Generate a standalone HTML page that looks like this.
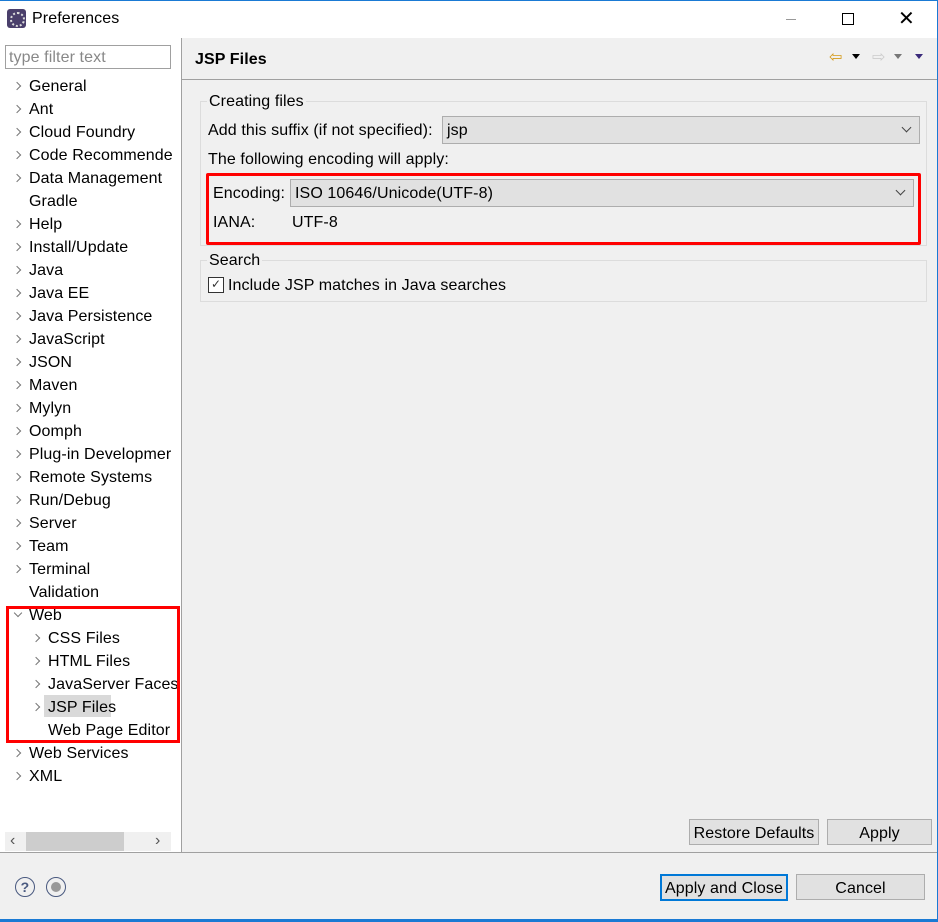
<!DOCTYPE html>
<html><head><style>
body{margin:0;width:938px;height:922px;position:relative;overflow:hidden;background:#f0f0f0;font-family:"Liberation Sans",sans-serif;font-size:16px;letter-spacing:0.1px;color:#000}
.a{position:absolute;white-space:nowrap}
.t{position:absolute;height:23px;line-height:23px;white-space:nowrap}
.ch{position:absolute;width:5px;height:5px;border-right:1px solid #777;border-bottom:1px solid #777;transform:rotate(-45deg)}
.btn{position:absolute;background:#e1e1e1;border:1px solid #adadad;text-align:center;line-height:24px;height:24px}
.r{position:relative;top:2px}
</style></head><body>
<div class="a" style="left:0;top:0;width:938px;height:1px;background:#1a7ad4"></div>
<div class="a" style="left:0;top:1px;width:938px;height:37px;background:#fff"></div>
<div class="a" style="left:7px;top:9px;width:19px;height:19px;border-radius:3px;background:#4a3f6b"></div>
<div class="a" style="left:10px;top:12px;width:11px;height:11px;border-radius:50%;border:2px dotted #ddd"></div>
<div class="a" style="left:32px;top:10px;font-size:16px">Preferences</div>
<div class="a" style="left:786px;top:19px;width:10px;height:1px;background:#999"></div>
<div class="a" style="left:842px;top:13px;width:10px;height:10px;border:1px solid #000"></div>
<div class="a" style="left:898px;top:6px;font-size:20px;font-weight:300">✕</div>
<div class="a" style="left:937px;top:0;width:1px;height:922px;background:#1a7ad4"></div>
<!-- left panel -->
<div class="a" style="left:0;top:38px;width:181px;height:814px;background:#fff"></div>
<div class="a" style="left:181px;top:38px;width:1px;height:814px;background:#a0a0a0"></div>
<div class="a" style="left:5px;top:45px;width:164px;height:22px;border:1px solid #a0a0a0;color:#888;line-height:24px;text-indent:3px">type filter text</div>
<div class="a" style="left:44px;top:695px;width:67px;height:22px;background:#d9d9d9"></div>
<div id="tree"></div>
<div class="a" style="left:5px;top:832px;width:166px;height:19px;background:#f0f0f0"></div>
<div class="a" style="left:26px;top:832px;width:98px;height:19px;background:#cdcdcd"></div>
<div class="a" style="left:10px;top:832px;font-size:16px;color:#555">&lsaquo;</div>
<div class="a" style="left:155px;top:832px;font-size:16px;color:#555">&rsaquo;</div>
<div class="a" style="left:6px;top:606px;width:168px;height:131px;border:3px solid #f00"></div>
<!-- right panel -->
<div class="a" style="left:195px;top:51px;font-weight:bold;font-size:16px">JSP Files</div>
<div class="a" style="left:182px;top:79px;width:755px;height:1px;background:#a0a0a0"></div>
<div class="a" style="left:829px;top:47px;color:#d49a1a;font-size:16px">⇦</div>
<div class="a" style="left:852px;top:54px;width:0;height:0;border-left:4px solid transparent;border-right:4px solid transparent;border-top:5px solid #000"></div>
<div class="a" style="left:872px;top:47px;color:#ccc;font-size:16px">⇨</div>
<div class="a" style="left:894px;top:54px;width:0;height:0;border-left:4px solid transparent;border-right:4px solid transparent;border-top:5px solid #777"></div>
<div class="a" style="left:915px;top:54px;width:0;height:0;border-left:4px solid transparent;border-right:4px solid transparent;border-top:5px solid #3a2a7a"></div>
<div class="a" style="left:200px;top:101px;width:725px;height:143px;border:1px solid #dcdcdc"></div>
<div class="a" style="left:207px;top:93px;background:#f0f0f0;padding:0 2px">Creating files</div>
<div class="a" style="left:208px;top:122px">Add this suffix (if not specified):</div>
<div class="a" style="left:442px;top:116px;width:476px;height:26px;border:1px solid #adadad;background:#e1e1e1;line-height:28px;text-indent:4px">jsp</div>
<div class="a" style="left:903px;top:124px;width:6px;height:6px;border-right:1px solid #444;border-bottom:1px solid #444;transform:rotate(45deg)"></div>
<div class="a" style="left:208px;top:151px">The following encoding will apply:</div>
<div class="a" style="left:290px;top:179px;width:622px;height:26px;border:1px solid #adadad;background:#e1e1e1;line-height:28px;text-indent:4px">ISO 10646/Unicode(UTF-8)</div>
<div class="a" style="left:897px;top:187px;width:6px;height:6px;border-right:1px solid #444;border-bottom:1px solid #444;transform:rotate(45deg)"></div>
<div class="a" style="left:213px;top:185px">Encoding:</div>
<div class="a" style="left:213px;top:214px">IANA:</div>
<div class="a" style="left:292px;top:214px">UTF-8</div>
<div class="a" style="left:206px;top:173px;width:709px;height:66px;border:3px solid #f00;border-radius:2px"></div>
<div class="a" style="left:200px;top:260px;width:725px;height:40px;border:1px solid #dcdcdc"></div>
<div class="a" style="left:207px;top:252px;background:#f0f0f0;padding:0 2px">Search</div>
<div class="a" style="left:208px;top:277px;width:14px;height:14px;border:1px solid #333;background:#fff"></div>
<div class="a" style="left:211px;top:277px;font-size:12px;color:#333">✓</div>
<div class="a" style="left:228px;top:277px">Include JSP matches in Java searches</div>
<div class="btn" style="left:689px;top:819px;width:128px;line-height:27px">Restore Defaults</div>
<div class="btn" style="left:827px;top:819px;width:103px;line-height:27px">Apply</div>
<div class="a" style="left:0;top:852px;width:937px;height:1px;background:#a0a0a0"></div>
<div class="a" style="left:15px;top:877px;width:18px;height:18px;border:1px solid #4a5a80;border-radius:50%;text-align:center;line-height:18px;font-weight:bold;color:#4a5a80;font-size:14px">?</div>
<div class="a" style="left:46px;top:877px;width:18px;height:18px;border:1px solid #4a5a80;border-radius:50%"></div>
<div class="a" style="left:51px;top:882px;width:10px;height:10px;border-radius:50%;background:#999"></div>
<div class="btn" style="left:660px;top:874px;width:124px;border:2px solid #0078d7;height:23px;line-height:26px">Apply and Close</div>
<div class="btn" style="left:796px;top:874px;width:127px;line-height:27px">Cancel</div>
<div class="a" style="left:0;top:919px;width:938px;height:3px;background:#1a7ad4"></div>
<script>
var items=[["General",0,1],["Ant",0,1],["Cloud Foundry",0,1],["Code Recommende",0,1],["Data Management",0,1],["Gradle",0,0],["Help",0,1],["Install/Update",0,1],["Java",0,1],["Java EE",0,1],["Java Persistence",0,1],["JavaScript",0,1],["JSON",0,1],["Maven",0,1],["Mylyn",0,1],["Oomph",0,1],["Plug-in Developmer",0,1],["Remote Systems",0,1],["Run/Debug",0,1],["Server",0,1],["Team",0,1],["Terminal",0,1],["Validation",0,0],["Web",0,2],["CSS Files",1,1],["HTML Files",1,1],["JavaServer Faces",1,1],["JSP Files",1,1],["Web Page Editor",1,0],["Web Services",0,1],["XML",0,1]];
var h="";items.forEach(function(it,i){var c=85+i*23,x=it[1]?48:29,cx=it[1]?33:14;
h+='<div class="t" style="left:'+x+'px;top:'+(c-10)+'px;width:'+(181-x)+'px;overflow:hidden">'+it[0]+'</div>';
if(it[2]==1)h+='<div class="ch" style="left:'+cx+'px;top:'+(c-2)+'px"></div>';
if(it[2]==2)h+='<div class="ch" style="left:'+(cx+1)+'px;top:'+(c-4)+'px;transform:rotate(45deg)"></div>';});
document.getElementById("tree").outerHTML=h;
</script>
</body></html>
